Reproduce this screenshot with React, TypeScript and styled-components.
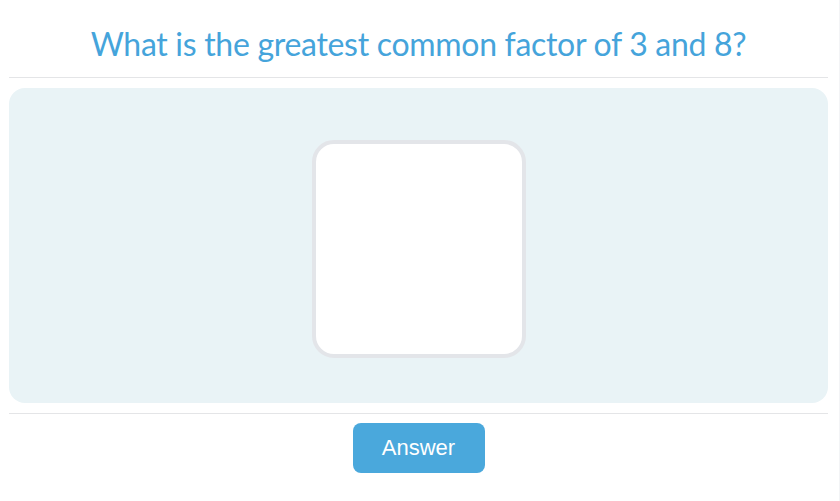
import React from "react"
import styled, { createGlobalStyle } from "styled-components"

const GlobalStyle = createGlobalStyle`
  html, body {
    margin: 0;
    padding: 0;
    background: #ffffff;
  }
`

const Page = styled.div`
  width: 840px;
  height: 501px;
  box-sizing: border-box;
  padding: 0 11px 0 9px;
  display: flex;
  flex-direction: column;
  border-right: 1px solid #f3f4f6;
`

const Title = styled.h1`
  margin: 0;
  height: 78px;
  box-sizing: border-box;
  padding-top: 22px;
  text-align: center;
  font-family: "Lato", "Open Sans", sans-serif;
  font-weight: 400;
  font-size: 32px;
  line-height: 44px;
  color: #45a4db;
  letter-spacing: -0.3px;
  border-bottom: 1px solid #e4e5e7;
`

const Panel = styled.div`
  margin-top: 10px;
  height: 315px;
  box-sizing: border-box;
  padding-top: 7px;
  border-radius: 16px;
  background: #e9f3f6;
  display: flex;
  align-items: center;
  justify-content: center;
`

const AnswerBox = styled.div`
  width: 214px;
  height: 218px;
  box-sizing: border-box;
  border: 4px solid #e3e5e9;
  border-radius: 22px;
  background: #ffffff;
`

const Footer = styled.div`
  margin-top: 10px;
  border-top: 1px solid #e4e5e7;
  padding-top: 9px;
  display: flex;
  justify-content: center;
`

const AnswerButton = styled.button`
  width: 132px;
  height: 50px;
  border: none;
  border-radius: 8px;
  background: #4aa8dc;
  color: #ffffff;
  font-family: "Liberation Sans", Arial, sans-serif;
  font-size: 22px;
  cursor: pointer;
`

export default function App() {
  return (
    <>
      <GlobalStyle />
      <Page>
        <Title>What is the greatest common factor of 3 and 8?</Title>
        <Panel>
          <AnswerBox />
        </Panel>
        <Footer>
          <AnswerButton>Answer</AnswerButton>
        </Footer>
      </Page>
    </>
  )
}
